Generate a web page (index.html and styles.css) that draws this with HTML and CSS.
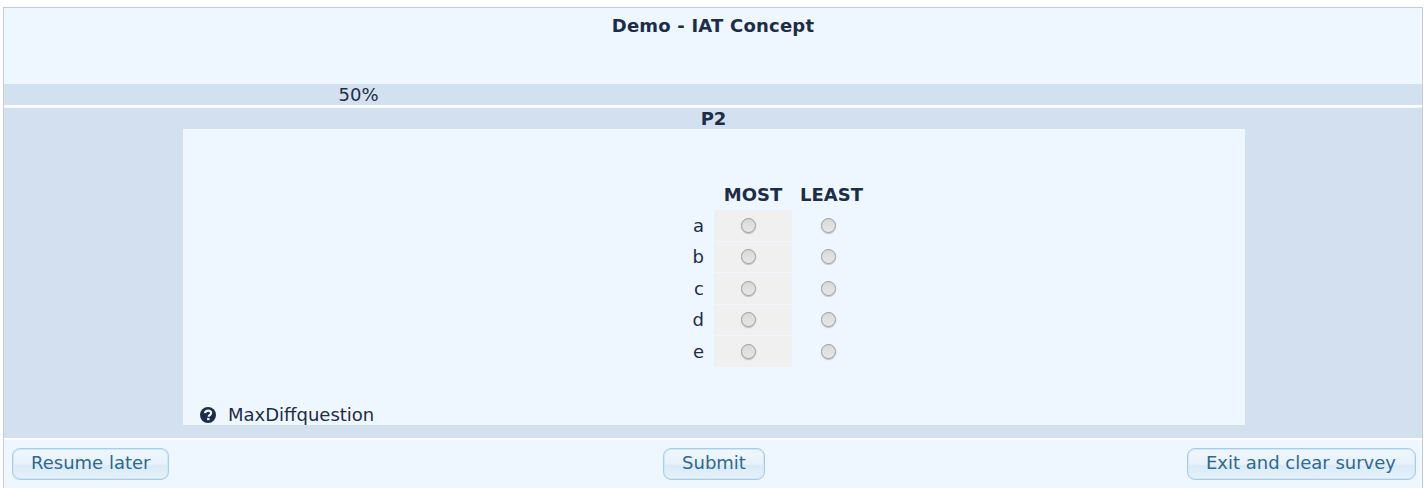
FILE: index.html
```html
<!DOCTYPE html>
<html lang="en">
<head>
    <meta charset="UTF-8">
    <meta name="viewport" content="width=device-width, initial-scale=1.0">
    <title>Demo - IAT Concept</title>
    <link rel="stylesheet" href="styles.css">
</head>
<body>
    <div class="survey">
        <div class="survey-title">Demo - IAT Concept</div>

        <div class="progress">
            <div class="progress-fill">50%</div>
        </div>

        <div class="page">
            <div class="page-title">P2</div>
            <div class="question">
                <table class="maxdiff">
                    <thead>
                        <tr>
                            <th></th>
                            <th class="head-most">MOST</th>
                            <th class="head-least">LEAST</th>
                        </tr>
                    </thead>
                    <tbody>
                        <tr>
                            <td class="label">a</td>
                            <td class="most"><input type="radio" name="most"></td>
                            <td class="least"><input type="radio" name="least"></td>
                        </tr>
                        <tr>
                            <td class="label">b</td>
                            <td class="most"><input type="radio" name="most"></td>
                            <td class="least"><input type="radio" name="least"></td>
                        </tr>
                        <tr>
                            <td class="label">c</td>
                            <td class="most"><input type="radio" name="most"></td>
                            <td class="least"><input type="radio" name="least"></td>
                        </tr>
                        <tr>
                            <td class="label">d</td>
                            <td class="most"><input type="radio" name="most"></td>
                            <td class="least"><input type="radio" name="least"></td>
                        </tr>
                        <tr>
                            <td class="label">e</td>
                            <td class="most"><input type="radio" name="most"></td>
                            <td class="least"><input type="radio" name="least"></td>
                        </tr>
                    </tbody>
                </table>
                <div class="help">
                    <svg class="help-icon" viewBox="0 0 16 16" width="16" height="16">
                        <circle cx="8" cy="8" r="8" fill="#1d2d47"/>
                        <path d="M5 6.2C5.2 4.5 6.5 3.6 8.1 3.6c1.7 0 3 1 3 2.4 0 1.1-.6 1.7-1.5 2.3-.7.4-.9.7-.9 1.5" fill="none" stroke="#eef6ff" stroke-width="2.2"/>
                        <rect x="7.1" y="10.9" width="2.4" height="2.3" fill="#eef6ff"/>
                    </svg>
                    <span>MaxDiffquestion</span>
                </div>
            </div>
        </div>

        <div class="footer">
            <button class="btn btn-left">Resume later</button>
            <button class="btn">Submit</button>
            <button class="btn btn-right">Exit and clear survey</button>
        </div>
    </div>
</body>
</html>
```

FILE: styles.css
```css
html, body {
    margin: 0;
    padding: 0;
    background-color: #fff;
}

body {
    font-family: "DejaVu Sans", Verdana, sans-serif;
    font-size: 18px;
    color: #1d2d47;
}

.survey {
    margin: 7px 3px 0 3px;
    border: 1px solid #c3ccd2;
    border-bottom: 0;
    background-color: #eef6ff;
}

.survey-title {
    height: 76px;
    padding: 7px 0 0 0;
    box-sizing: border-box;
    text-align: center;
    font-weight: bold;
    line-height: 21px;
    letter-spacing: 0.2px;
}

.progress {
    height: 21px;
    background-color: #d3e0f0;
    border-bottom: 2px solid #fff;
}

.progress-fill {
    width: 50%;
    text-align: center;
    line-height: 21px;
}

.page {
    height: 330px;
    margin-top: 1px;
    padding-left: 2px;
    box-sizing: border-box;
    background-color: #d3e0f0;
    display: flex;
    flex-direction: column;
    align-items: center;
}

.page-title {
    height: 21px;
    line-height: 21px;
    font-weight: bold;
    margin-left: -1px;
}

.question {
    width: 1062px;
    height: 296px;
    background-color: #eef6ff;
    display: flex;
    flex-direction: column;
}

.maxdiff {
    width: 100%;
    margin-top: 49px;
    border-collapse: separate;
    border-spacing: 0;
}

.maxdiff th {
    height: 32px;
    padding: 0;
}

.maxdiff .head-most {
    text-align: center;
}

.maxdiff .head-least {
    padding-left: 8px;
    text-align: left;
}

.maxdiff td {
    height: 31.5px;
    padding: 0;
    box-sizing: border-box;
    border-bottom: 1.5px solid #eef6ff;
}

.maxdiff .label {
    width: 50%;
    padding-right: 10px;
    text-align: right;
}

.maxdiff .most {
    width: 78px;
    background-color: #f0f0f0;
}

.maxdiff input {
    appearance: none;
    display: block;
    width: 15px;
    height: 15px;
    margin: 0 0 0 27px;
    border: 1.5px solid #9c9c9c;
    border-radius: 50%;
    box-sizing: border-box;
    background: linear-gradient(#d8d8d8, #e8e8e8);
    box-shadow: 0 1px 1px rgba(0, 0, 0, 0.22);
}

.maxdiff .least input {
    margin-left: 28.5px;
}

.help {
    margin: auto 0 0 17px;
    height: 21px;
    display: flex;
    align-items: center;
    gap: 12px;
}

.footer {
    display: grid;
    grid-template-columns: 1fr auto 1fr;
    align-items: start;
    height: 50px;
    border-top: 2px solid #fff;
    padding: 8px 6px 0 8px;
    box-sizing: border-box;
}

.btn {
    height: 32px;
    padding: 0 18px 4px 18px;
    font-family: inherit;
    font-size: 18px;
    color: #2f6890;
    border: 1px solid #a8cde9;
    border-radius: 8px;
    box-shadow: inset 0 0 0 1px #d3e6f6;
    background: linear-gradient(#eff6fd 0%, #e8f2fb 50%, #d9ebf8 55%, #e6f2fb 100%);
}

.btn-left {
    justify-self: start;
}

.btn-right {
    justify-self: end;
    padding-right: 19px;
}
```
